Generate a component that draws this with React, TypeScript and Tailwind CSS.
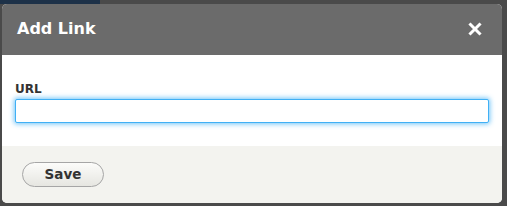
const font = { fontFamily: '"DejaVu Sans", "Liberation Sans", sans-serif' };

function CloseIcon() {
  return (
    <svg width="14" height="14" viewBox="0 0 14 14" fill="none" stroke="currentColor" strokeWidth="3" strokeLinecap="square">
      <path d="M2.5 2.5 L11.5 11.5 M11.5 2.5 L2.5 11.5" />
    </svg>
  );
}

export default function App() {
  return (
    <div className="w-[507px] h-[206px] bg-[#4a4a4a] overflow-hidden" style={font}>
      <div className="h-[4px] w-[100px] bg-[#1d3148]" />
      <div className="ml-[2px] w-[500px] h-[199px] rounded-[5px] overflow-hidden flex flex-col bg-white">
        <div className="h-[51px] shrink-0 bg-[#6b6b6b] flex items-center justify-between pl-[15px] pr-[20px]">
          <h1 className="text-[16px] font-bold text-white leading-none pb-[2px]">Add Link</h1>
          <button className="text-white flex pb-[2px]">
            <CloseIcon />
          </button>
        </div>
        <div className="h-[91px] shrink-0 px-[13px] pt-[26px]">
          <label className="block text-[12px] leading-[16px] font-bold text-[#333]">URL</label>
          <input
            type="text"
            className="mt-[2px] block w-full h-[24px] rounded-[2px] border border-[#40b0f5] bg-white outline-none shadow-[0_0_5px_1px_rgba(64,176,245,0.75)]"
          />
        </div>
        <div className="flex-1 bg-[#f3f3ef] pl-[20px] pt-[16px]">
          <button className="w-[82px] h-[25px] rounded-full border border-[#a6a6a6] bg-gradient-to-b from-[#fcfcfa] to-[#e6e6e1] text-[13.5px] font-bold text-[#333] leading-none">
            Save
          </button>
        </div>
      </div>
    </div>
  );
}
